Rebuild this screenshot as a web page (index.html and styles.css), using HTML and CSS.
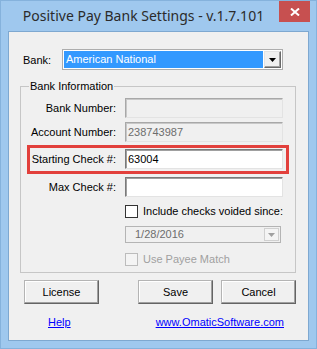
FILE: index.html
```html
<!DOCTYPE html>
<html lang="en">
<head>
    <meta charset="UTF-8">
    <title>Positive Pay Bank Settings</title>
    <link rel="stylesheet" href="styles.css">
</head>
<body>
    <div class="window">
        <div class="titlebar">
            <div class="title">Positive Pay Bank Settings - v.1.7.101</div>
            <div class="close">
                <svg width="10" height="8" viewBox="0 0 10 8"><path d="M1 0.5 L9 7.5 M9 0.5 L1 7.5" stroke="#fff" stroke-width="2" fill="none"/></svg>
            </div>
        </div>
        <div class="client">
            <div class="bank-row">
                <span class="bank-label">Bank:</span>
                <div class="combo">
                    <span class="combo-value">American National</span>
                    <span class="combo-btn">
                        <svg width="7" height="4" viewBox="0 0 7 4"><path d="M0 0 H7 L3.5 4 Z" fill="#000"/></svg>
                    </span>
                </div>
            </div>

            <fieldset class="group">
                <legend>Bank Information</legend>
                <div class="field">
                    <span class="label">Bank Number:</span>
                    <input class="text" type="text" value="" disabled>
                </div>
                <div class="field account">
                    <span class="label">Account Number:</span>
                    <input class="text" type="text" value="238743987" disabled>
                </div>
                <div class="field highlight">
                    <span class="label">Starting Check #:</span>
                    <input class="text" type="text" value="63004">
                </div>
                <div class="field max">
                    <span class="label">Max Check #:</span>
                    <input class="text" type="text" value="">
                </div>
                <div class="field check-row">
                    <span></span>
                    <span class="check-item"><span class="check"></span>Include checks voided since:</span>
                </div>
                <div class="field date-row">
                    <span></span>
                    <div class="date-combo">
                        <span class="date-value">1/28/2016</span>
                        <span class="date-btn">
                            <svg width="7" height="4" viewBox="0 0 7 4"><path d="M0 0 H7 L3.5 4 Z" fill="#a0a0a0"/></svg>
                        </span>
                    </div>
                </div>
                <div class="field payee-row">
                    <span></span>
                    <span class="check-item disabled"><span class="check"></span>Use Payee Match</span>
                </div>
            </fieldset>

            <div class="buttons">
                <button class="license">License</button>
                <button class="save">Save</button>
                <button>Cancel</button>
            </div>

            <div class="links">
                <a href="#" class="help">Help</a>
                <a href="#" class="site">www.OmaticSoftware.com</a>
            </div>
        </div>
    </div>
</body>
</html>
```

FILE: styles.css
```css
* {
    box-sizing: border-box;
}
body {
    margin: 0;
    font-family: "Liberation Sans", Arial, sans-serif;
    font-size: 11px;
    color: #000;
}
.window {
    width: 317px;
    height: 349px;
    background-color: #9fc8ee;
    border: 1px solid #85b2dc;
    display: flex;
    flex-direction: column;
}
.titlebar {
    height: 30px;
    display: flex;
    align-items: flex-start;
}
.title {
    flex: 1;
    padding-left: 7px;
    text-align: center;
    font-family: "Noto Sans", sans-serif;
    font-size: 14px;
    line-height: 30px;
    color: #2b2b2b;
    white-space: nowrap;
}
.close {
    width: 31px;
    height: 21px;
    margin-right: 6px;
    background-color: #c75050;
    display: flex;
    align-items: center;
    justify-content: center;
}
.client {
    flex: 1;
    margin: 0 7px 7px 7px;
    background-color: #f0f0f0;
    border: 1px solid #7ea8d0;
    padding: 0 12px 0 11px;
}
.bank-row {
    display: flex;
    align-items: center;
    margin-top: 17px;
    height: 21px;
}
.bank-label {
    width: 42px;
    padding-left: 3px;
}
.combo {
    width: 221px;
    height: 21px;
    border: 1px solid #adadad;
    padding: 1px;
    display: flex;
    background-color: #fff;
}
.combo-value {
    flex: 1;
    background-color: #3399ff;
    color: #fff;
    padding-left: 2px;
    line-height: 17px;
}
.combo-btn {
    width: 17px;
    margin-left: 1px;
    background-color: #f0f0f0;
    border: 1px solid;
    border-color: #e3e3e3 #696969 #696969 #e3e3e3;
    box-shadow: inset -1px -1px 0 #a0a0a0;
    display: flex;
    align-items: center;
    justify-content: center;
}
.group {
    margin: 10px 0 0 0;
    width: 276px;
    padding: 5px 12px 6px 6px;
    border: 1px solid #c6c6c6;
    min-width: 0;
}
.group legend {
    margin-left: 2px;
    padding: 0 1px;
    line-height: 13px;
}
.field {
    display: grid;
    grid-template-columns: 1fr 158px;
    column-gap: 9px;
    align-items: center;
}
.label {
    text-align: right;
    white-space: nowrap;
}
.text {
    width: 158px;
    height: 20px;
    margin: 0;
    padding: 0 0 0 2px;
    font-family: "Liberation Sans", Arial, sans-serif;
    font-size: 11px;
    color: #000;
    background-color: #fff;
    border: 1px solid;
    border-color: #7a7a7a #e3e3e3 #e3e3e3 #7a7a7a;
    box-shadow: inset 1px 1px 0 #a0a0a0;
    outline: none;
}
.text:disabled {
    background-color: #f0f0f0;
    color: #6d6d6d;
    border-color: #a8a8a8 #e3e3e3 #e3e3e3 #a8a8a8;
    box-shadow: inset 1px 1px 0 #c8c8c8;
}
.account {
    margin-top: 4px;
}
.highlight {
    margin: 3px -6px 0 0;
    border: 3px solid #e2403c;
    padding: 1px 3px 2px 0;
}
.max {
    margin-top: 3px;
}
.check-row {
    margin-top: 8px;
}
.check-item {
    display: flex;
    align-items: center;
    line-height: 13px;
    white-space: nowrap;
}
.check {
    width: 13px;
    height: 13px;
    margin-right: 5px;
    background-color: #fff;
    border: 1px solid #333;
}
.check-item.disabled {
    color: #a0a0a0;
}
.check-item.disabled .check {
    background-color: #f4f4f4;
    border-color: #bcbcbc;
}
.date-row {
    margin-top: 8px;
}
.date-combo {
    width: 156px;
    height: 17px;
    border: 1px solid #b4b4b4;
    background-color: #f0f0f0;
    display: flex;
    padding: 1px;
}
.date-value {
    flex: 1;
    color: #6d6d6d;
    padding-left: 8px;
    line-height: 13px;
}
.date-btn {
    width: 15px;
    background-color: #f4f4f4;
    border: 1px solid #d0d0d0;
    display: flex;
    align-items: center;
    justify-content: center;
}
.payee-row {
    margin-top: 10px;
}
.buttons {
    display: flex;
    gap: 8px;
    margin-top: 7px;
    padding-left: 4px;
}
.buttons button {
    width: 75px;
    height: 24px;
    margin: 0;
    padding: 0;
    font-family: "Liberation Sans", Arial, sans-serif;
    font-size: 11px;
    color: #000;
    background-color: #f0f0f0;
    border: 1px solid;
    border-color: #b4b4b4 #646464 #646464 #b4b4b4;
    box-shadow: inset -1px -1px 0 #a0a0a0, inset 1px 1px 0 #fff;
}
.buttons .license {
    margin-right: 31px;
}
.links {
    display: flex;
    margin-top: 12px;
    line-height: 13px;
}
.links a {
    color: #0000ff;
    text-decoration: underline;
}
.links .help {
    margin-left: 28px;
}
.links .site {
    margin-left: auto;
    margin-right: 12px;
}
```
